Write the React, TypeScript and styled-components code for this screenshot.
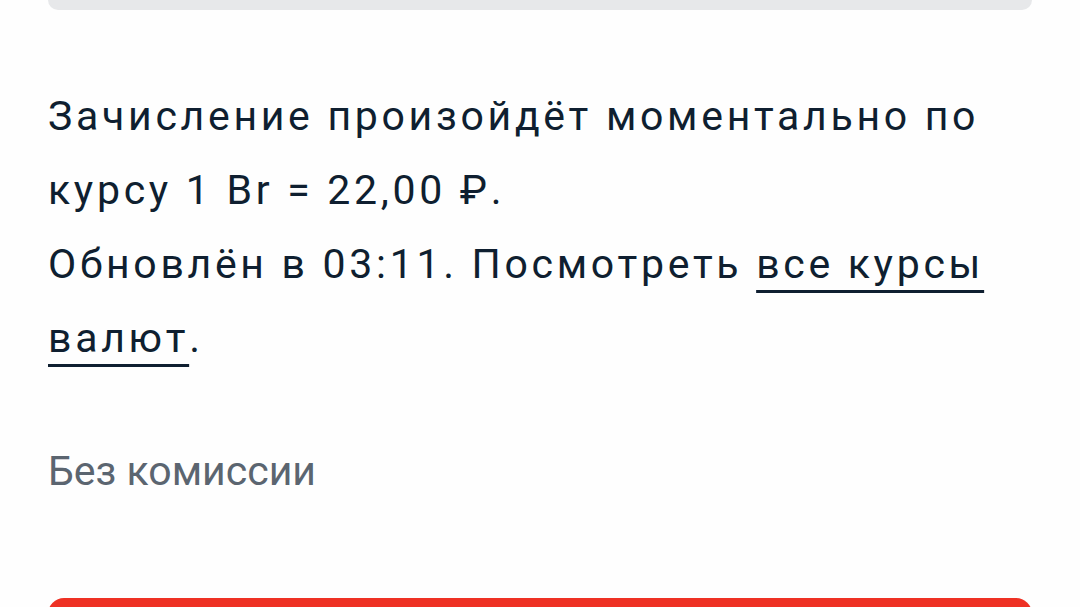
import styled, { createGlobalStyle } from "styled-components";

const GlobalStyle = createGlobalStyle`
  html, body {
    margin: 0;
    padding: 0;
    background: #fefefe;
  }
  body {
    font-family: Roboto, "Noto Sans", sans-serif;
    -webkit-font-smoothing: antialiased;
  }
`;

const Screen = styled.div`
  width: 1080px;
  height: 607px;
  overflow: hidden;
  box-sizing: border-box;
  padding: 0 48px;
  display: flex;
  flex-direction: column;
`;

const InputField = styled.div`
  height: 10px;
  background: #e7e8ea;
  border-radius: 0 0 12px 12px;
  flex-shrink: 0;
`;

const Notice = styled.p`
  margin: 69px 0 0;
  font-size: 41px;
  line-height: 74px;
  letter-spacing: 3.7px;
  color: #0f1f30;
`;

const RatesLink = styled.a`
  color: inherit;
  text-decoration: underline;
  text-decoration-thickness: 3px;
  text-underline-offset: 12px;
  cursor: pointer;
`;

const Fee = styled.div`
  margin-top: 59px;
  font-size: 41px;
  line-height: 74px;
  color: #5b6570;
`;

const SubmitButton = styled.button`
  margin-top: 90px;
  height: 64px;
  border: none;
  border-radius: 16px;
  background: #ee3124;
  flex-shrink: 0;
`;

export default function App() {
  return (
    <>
      <GlobalStyle />
      <Screen>
        <InputField />
        <Notice>
          Зачисление произойдёт моментально по курсу 1 Br = 22,00 ₽.
          <br />
          Обновлён в 03:11. Посмотреть <RatesLink>все курсы валют</RatesLink>.
        </Notice>
        <Fee>Без комиссии</Fee>
        <SubmitButton />
      </Screen>
    </>
  );
}
